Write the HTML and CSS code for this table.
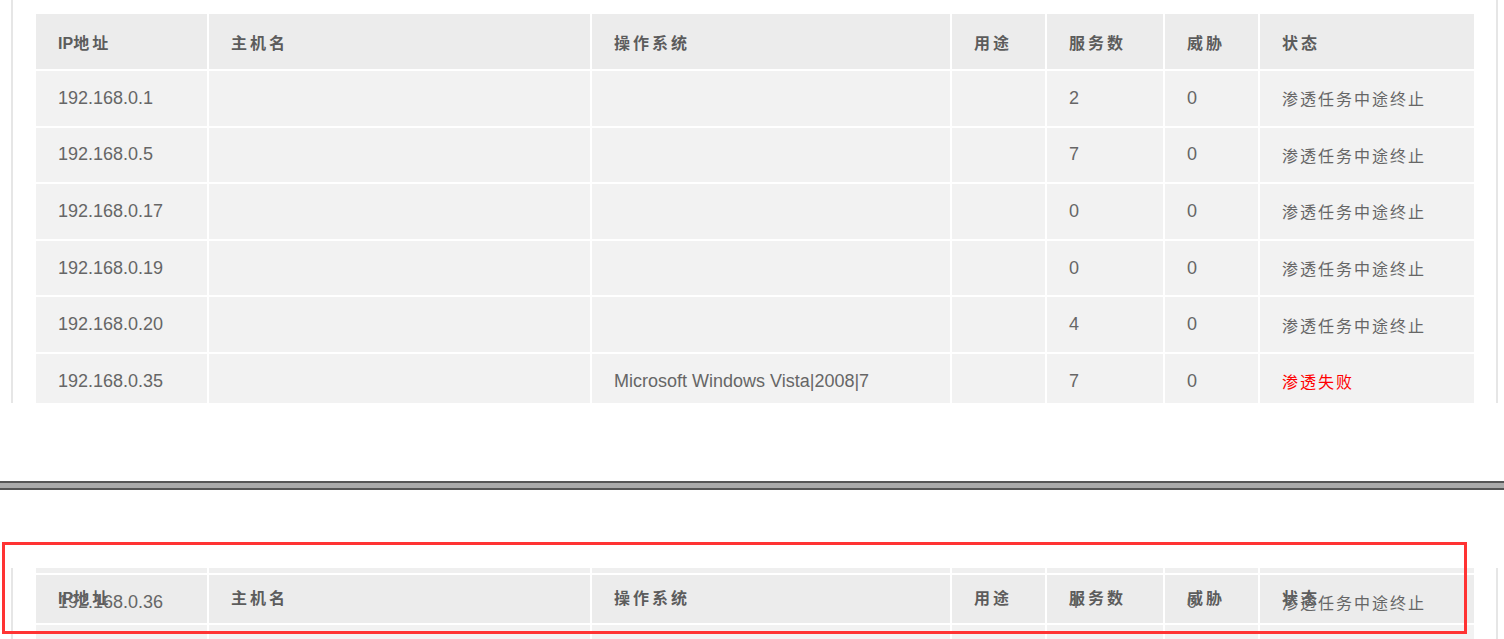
FILE: index.html
```html
<!DOCTYPE html>
<html lang="zh-CN">
<head>
    <meta charset="UTF-8">
    <meta name="viewport" content="width=device-width, initial-scale=1.0">
    <title>主机列表 - 打印预览</title>
    <link rel="stylesheet" href="styles.css">
</head>
<body>

    <!-- page 1 -->
    <div class="sheet sheet-first">
        <table class="host-table">
            <colgroup>
                <col class="c-ip"><col class="c-name"><col class="c-os"><col class="c-use">
                <col class="c-svc"><col class="c-risk"><col class="c-state">
            </colgroup>
            <thead>
                <tr>
                    <th><span class="latin">IP</span>地址</th><th>主机名</th><th>操作系统</th><th>用途</th>
                    <th>服务数</th><th>威胁</th><th>状态</th>
                </tr>
            </thead>
            <tbody>
                <tr><td>192.168.0.1</td><td></td><td></td><td></td><td>2</td><td>0</td><td class="state">渗透任务中途终止</td></tr>
                <tr><td>192.168.0.5</td><td></td><td></td><td></td><td>7</td><td>0</td><td class="state">渗透任务中途终止</td></tr>
                <tr><td>192.168.0.17</td><td></td><td></td><td></td><td>0</td><td>0</td><td class="state">渗透任务中途终止</td></tr>
                <tr><td>192.168.0.19</td><td></td><td></td><td></td><td>0</td><td>0</td><td class="state">渗透任务中途终止</td></tr>
                <tr><td>192.168.0.20</td><td></td><td></td><td></td><td>4</td><td>0</td><td class="state">渗透任务中途终止</td></tr>
                <tr><td>192.168.0.35</td><td></td><td>Microsoft Windows Vista|2008|7</td><td></td><td>7</td><td>0</td><td class="state failed">渗透失败</td></tr>
            </tbody>
        </table>
    </div>

    <div class="page-break"></div>

    <!-- page 2: repeated header printed over the split row -->
    <div class="sheet sheet-next">
        <table class="host-table">
            <colgroup>
                <col class="c-ip"><col class="c-name"><col class="c-os"><col class="c-use">
                <col class="c-svc"><col class="c-risk"><col class="c-state">
            </colgroup>
            <thead>
                <tr class="strip"><td></td><td></td><td></td><td></td><td></td><td></td><td></td></tr>
                <tr class="head-short">
                    <th><span class="latin">IP</span>地址</th><th>主机名</th><th>操作系统</th><th>用途</th>
                    <th>服务数</th><th>威胁</th><th>状态</th>
                </tr>
            </thead>
            <tbody>
                <tr><td></td><td></td><td></td><td></td><td></td><td></td><td></td></tr>
            </tbody>
        </table>

        <table class="host-table ghost-row">
            <colgroup>
                <col class="c-ip"><col class="c-name"><col class="c-os"><col class="c-use">
                <col class="c-svc"><col class="c-risk"><col class="c-state">
            </colgroup>
            <tbody>
                <tr><td>192.168.0.36</td><td></td><td></td><td></td><td>4</td><td>0</td><td class="state">渗透任务中途终止</td></tr>
            </tbody>
        </table>
    </div>

    <div class="mark-box"></div>

</body>
</html>
```

FILE: styles.css
```css
body {
    margin: 0;
    background: #fff;
    font-family: "Liberation Sans", Arial, "Noto Sans CJK SC", sans-serif;
    color: #666;
    position: relative;
    height: 639px;
    overflow: hidden;
}
.sheet {
    margin-left: 11px;
    width: 1487px;
    border-left: 2px solid #e6e6e6;
    border-right: 2px solid #e6e6e6;
    padding: 0 20px 0 21px;
    box-sizing: border-box;
}
.sheet-first {
    height: 403px;
    padding-top: 12px;
    overflow: hidden;
}
.sheet-next {
    margin-top: 78px;
    position: relative;
    height: 71px;
    overflow: hidden;
}
.sheet-next .host-table {
    margin-top: -2px;
}
.host-table {
    width: 1442px;
    table-layout: fixed;
    border-collapse: separate;
    border-spacing: 2px;
}
.c-ip { width: 171px; }
.c-name { width: 381px; }
.c-os { width: 358px; }
.c-use { width: 93px; }
.c-svc { width: 116px; }
.c-risk { width: 93px; }
.c-state { width: 214px; }
.host-table th,
.host-table td {
    padding: 0 0 0 22px;
    text-align: left;
    white-space: nowrap;
    overflow: hidden;
}
.host-table th {
    height: 55px;
    background: #ececec;
    font-size: 16px;
    font-weight: bold;
    letter-spacing: 3px;
    color: #5c5c5c;
}
.host-table th .latin {
    letter-spacing: 0;
}
.host-table td {
    height: 54.6px;
    background: #f2f2f2;
    font-size: 18px;
}
.host-table td.state {
    font-size: 16px;
    letter-spacing: 2px;
}
.host-table td.failed {
    color: #f00;
}
.host-table .strip td {
    height: 5px;
    background: #efefef;
}
.host-table .head-short th {
    height: 44px;
    padding-bottom: 4px;
}
.ghost-row {
    position: absolute;
    top: 7px;
    left: 21px;
}
.ghost-row td {
    background: transparent;
}
.page-break {
    height: 5px;
    margin-top: 78px;
    background: #aaa;
    border-top: 2px solid #555;
    border-bottom: 2px solid #555;
}
.mark-box {
    position: absolute;
    left: 2px;
    top: 542px;
    width: 1465px;
    height: 92px;
    box-sizing: border-box;
    border: 3px solid #f33;
}
```
